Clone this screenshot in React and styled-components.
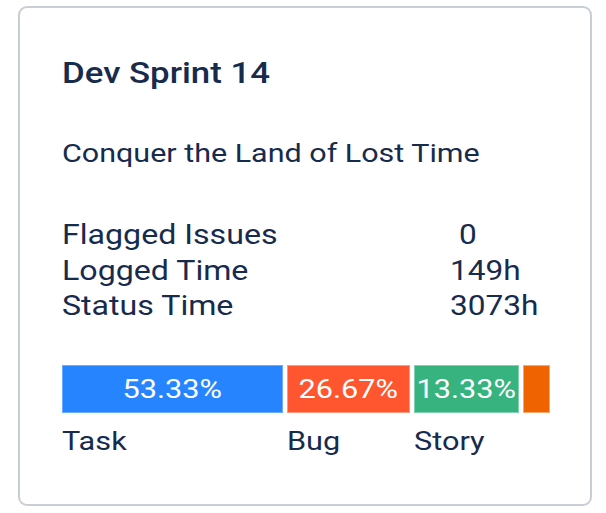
import React from "react";
import styled, { createGlobalStyle } from "styled-components";

const Global = createGlobalStyle`
  html, body { margin: 0; padding: 0; background: #ffffff; }
  body { font-family: Roboto, "Noto Sans", sans-serif; color: #172B4D; }
`;

const Page = styled.div`
  padding: 6px 0 0 18px;
  width: 606px;
  height: 513px;
  box-sizing: border-box;
`;

const Card = styled.div`
  width: 574px;
  height: 500px;
  box-sizing: border-box;
  border: 2px solid #C9CDD4;
  border-radius: 9px;
  padding: 47px 0 0 42px;
  display: flex;
  flex-direction: column;
`;

/* Text in this card is set a little wide */
const Wide = styled.span`
  display: inline-block;
  white-space: nowrap;
  transform: scaleX(${(p) => p.$x || 1.17});
  transform-origin: ${(p) => (p.$center ? "center" : "left")} center;
`;

const Title = styled.h1`
  margin: 0;
  font-size: 30px;
  line-height: 36px;
  font-weight: 500;
  color: #172B4D;
`;

const Subtitle = styled.p`
  margin: 46px 0 0;
  font-size: 26.5px;
  line-height: 32px;
  font-weight: 400;
`;

const Stats = styled.div`
  margin-top: 49px;
  display: grid;
  grid-template-columns: 388px auto;
  grid-auto-rows: 35.5px;
  font-size: 27px;
  line-height: 35.5px;
`;

const Value = styled.span`
  padding-left: ${(p) => p.$indent || 0}px;
`;

const Segments = styled.div`
  margin-top: 40px;
  display: flex;
  gap: 4px;
`;

const Segment = styled.div`
  display: flex;
  flex-direction: column;
  flex: 0 0 auto;
`;

const Bar = styled.div`
  height: 48px;
  box-sizing: border-box;
  background: ${(p) => p.$color};
  border: 1px solid ${(p) => p.$edge};
  color: #ffffff;
  font-size: 26px;
  line-height: 46px;
  text-align: center;
  white-space: nowrap;
`;

const Label = styled.div`
  margin-top: 10px;
  font-size: 26px;
  line-height: 36px;
  white-space: nowrap;
`;

const stats = [
  { label: "Flagged Issues", value: "0", indent: 9 },
  { label: "Logged Time", value: "149h" },
  { label: "Status Time", value: "3073h" },
];

const segments = [
  { pct: "53.33%", label: "Task", width: 221, color: "#2684FF", edge: "#6AAAFF" },
  { pct: "26.67%", label: "Bug", width: 123, color: "#FF5630", edge: "#FF9A80" },
  { pct: "13.33%", label: "Story", width: 105, color: "#36B37E", edge: "#7FD0AE" },
  { pct: "", label: "", width: 27, color: "#F06400", edge: "#F8A870" },
];

export default function App() {
  return (
    <>
      <Global />
      <Page>
        <Card>
          <Title>
            <Wide $x={1.16}>Dev Sprint 14</Wide>
          </Title>
          <Subtitle>
            <Wide $x={1.15}>Conquer the Land of Lost Time</Wide>
          </Subtitle>
          <Stats>
            {stats.map((s) => (
              <React.Fragment key={s.label}>
                <span>
                  <Wide $x={1.19}>{s.label}</Wide>
                </span>
                <Value $indent={s.indent}>
                  <Wide $x={1.17}>{s.value}</Wide>
                </Value>
              </React.Fragment>
            ))}
          </Stats>
          <Segments>
            {segments.map((s, i) => (
              <Segment key={i} style={{ width: s.width }}>
                <Bar $color={s.color} $edge={s.edge}>
                  {s.pct && (
                    <Wide $x={1.18} $center>
                      {s.pct}
                    </Wide>
                  )}
                </Bar>
                <Label>
                  <Wide $x={1.18}>{s.label || "\u00a0"}</Wide>
                </Label>
              </Segment>
            ))}
          </Segments>
        </Card>
      </Page>
    </>
  );
}
